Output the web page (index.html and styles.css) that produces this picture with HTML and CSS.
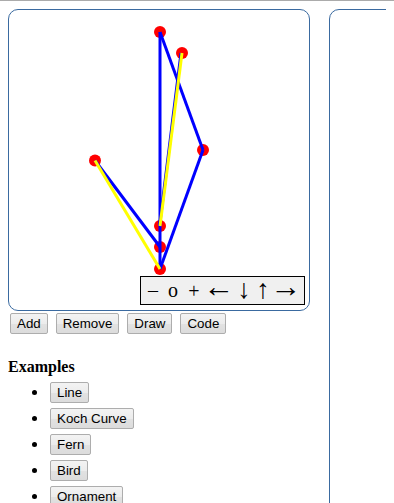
FILE: index.html
```html
<!DOCTYPE html>
<html>
<head>
<meta charset="utf-8">
<link rel="stylesheet" href="styles.css">
</head>
<body>
<div class="main">
  <div class="left">
    <div class="panel canvas-panel">
      <svg class="drawing" width="300" height="300" viewBox="0 0 300 300">
        <g fill="#ff0000">
          <circle cx="151" cy="22" r="6"/>
          <circle cx="173" cy="43" r="6"/>
          <circle cx="194" cy="140" r="6"/>
          <circle cx="86" cy="150.5" r="6"/>
          <circle cx="151" cy="216" r="6"/>
          <circle cx="151" cy="237" r="6"/>
          <circle cx="151" cy="259" r="6"/>
        </g>
        <g stroke="#0000ff" stroke-width="3" fill="none">
          <line x1="151" y1="22" x2="151" y2="259"/>
          <line x1="151" y1="22" x2="194" y2="140"/>
          <line x1="194" y1="140" x2="151" y2="259"/>
          <line x1="86" y1="150.5" x2="151" y2="237"/>
          <line x1="172" y1="43" x2="150.5" y2="216"/>
        </g>
        <g stroke="#ffff00" stroke-width="3" fill="none">
          <line x1="173" y1="43" x2="151" y2="216"/>
          <line x1="86" y1="150.5" x2="151" y2="259"/>
        </g>
      </svg>
      <div class="toolbar">
        <span class="tool t-minus">–</span><span class="tool t-zero">o</span><span class="tool t-plus">+</span><span class="tool t-left">←</span><span class="tool t-down">↓</span><span class="tool t-up">↑</span><span class="tool t-right">→</span>
      </div>
    </div>
    <div class="actions">
      <button class="btn">Add</button>
      <button class="btn">Remove</button>
      <button class="btn">Draw</button>
      <button class="btn">Code</button>
    </div>
    <h4 class="examples-title">Examples</h4>
    <ul class="examples">
      <li><button class="btn">Line</button></li>
      <li><button class="btn">Koch Curve</button></li>
      <li><button class="btn">Fern</button></li>
      <li><button class="btn">Bird</button></li>
      <li><button class="btn">Ornament</button></li>
    </ul>
  </div>
  <div class="panel code-panel"></div>
</div>
</body>
</html>
```

FILE: styles.css
```css
html {
  border-top: 1px solid #ababab;
  overflow: hidden;
  background: #fff;
}
body {
  margin: 8px;
  font-family: "Liberation Serif", "Times New Roman", serif;
  font-size: 16px;
  color: #000;
}
.main {
  display: flex;
  align-items: flex-start;
  gap: 19px;
}
.left {
  width: 302px;
  flex: none;
}
.panel {
  border: 1px solid #3a6aa0;
  border-radius: 10px;
}
.canvas-panel {
  position: relative;
  width: 300px;
  height: 300px;
}
.drawing {
  display: block;
}
.toolbar {
  position: absolute;
  right: 4px;
  bottom: 5px;
  display: flex;
  height: 27px;
  padding: 0 3px 0 2px;
  border: 1px solid #000;
  background: #f0f0f0;
  font-family: "Liberation Serif", "Times New Roman", serif;
  font-size: 20px;
  color: #000;
}
.tool {
  display: flex;
  align-items: center;
  justify-content: center;
  box-sizing: border-box;
  height: 27px;
  line-height: 1;
}
.t-minus { width: 20px; padding-bottom: 2px; }
.t-zero { width: 20px; padding-bottom: 1px; }
.t-plus { width: 22px; }
.t-left { width: 28px; font-size: 31px; padding-bottom: 8px; }
.t-down { width: 22px; font-size: 27px; padding-bottom: 2px; }
.t-up { width: 16px; font-size: 27px; padding-bottom: 2px; }
.t-right { width: 30px; font-size: 31px; padding-bottom: 8px; }
.actions {
  display: flex;
  gap: 4px;
}
.btn {
  margin: 2px;
  height: 21px;
  padding: 0 6px;
  font-family: "Liberation Sans", Arial, sans-serif;
  font-size: 13.33px;
  color: #000;
  background: linear-gradient(#f3f3f3, #ececec 50%, #e2e2e2 51%, #dcdcdc);
  border: 1px solid #adadad;
  border-radius: 2px;
  vertical-align: middle;
}
.examples-title {
  margin: 22px 0 0;
  font-size: 16px;
  line-height: 18px;
  font-weight: bold;
}
.examples {
  margin: 3px 0 0;
  padding-left: 40px;
}
.examples li {
  height: 26px;
  line-height: 26px;
}
.examples .btn {
  vertical-align: baseline;
}
.code-panel {
  flex: 1 0 auto;
  height: 600px;
  margin-right: -30px;
}
```
